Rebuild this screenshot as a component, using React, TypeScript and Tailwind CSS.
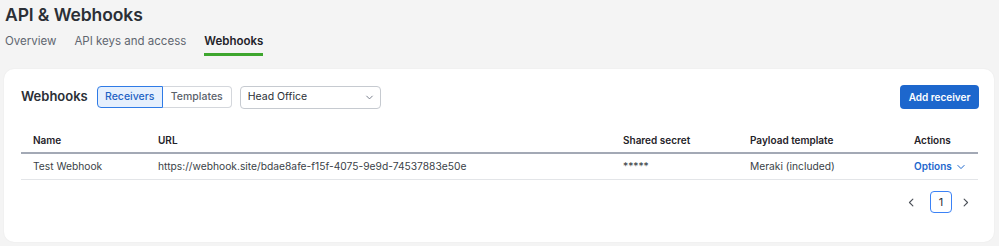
import React from 'react';

const rows = [
  {
    name: 'Test Webhook',
    url: 'https://webhook.site/bdae8afe-f15f-4075-9e9d-74537883e50e',
    secret: '*****',
    template: 'Meraki (included)',
  },
];

function Chevron({ dir = 'down', className = '' }: { dir?: 'down' | 'left' | 'right'; className?: string }) {
  const d =
    dir === 'down' ? 'M3 5.5l5 5 5-5' : dir === 'left' ? 'M10 3l-5 5 5 5' : 'M6 3l5 5-5 5';
  return (
    <svg viewBox="0 0 16 16" className={className} fill="none" stroke="currentColor" strokeWidth="1.6" strokeLinecap="round" strokeLinejoin="round">
      <path d={d} />
    </svg>
  );
}

export default function App() {
  return (
    <div className="w-[999px] h-[246px] bg-[#f4f4f4] font-['Inter',sans-serif] text-[#2a2e36] overflow-hidden">
      {/* Page header */}
      <div className="px-[5px] pt-[3px]">
        <h1 className="text-[17.5px] leading-[24px] font-semibold tracking-[-0.1px] text-[#2b2f36]">API &amp; Webhooks</h1>
        <div className="flex gap-[18px] mt-[6px] text-[11.5px] leading-[16px]">
          <div className="text-[#5f6670] pb-[6px]">Overview</div>
          <div className="text-[#5f6670] pb-[6px]">API keys and access</div>
          <div className="font-semibold text-[#1f2329] pb-[4px] border-b-[3px] border-[#3ea62e]">Webhooks</div>
        </div>
      </div>

      {/* Card */}
      <div className="mx-[4px] mt-[13px] h-[173px] w-[990px] bg-white rounded-[10px] shadow-[0_0_2px_rgba(0,0,0,0.06)] px-[17px] pt-[16px]">
        <div className="flex items-center h-[24px]">
          <div className="text-[13px] font-semibold text-[#2b2f36] mr-[9px]">Webhooks</div>
          <div className="flex h-[22px] text-[10.5px] font-medium">
            <div className="w-[66px] justify-center flex items-center rounded-l-[4px] border border-[#2f7be6] bg-[#e6f0fd] text-[#1f62c4]">Receivers</div>
            <div className="w-[69px] justify-center flex items-center rounded-r-[4px] border border-l-0 border-[#d4d7dc] text-[#5b626b]">Templates</div>
          </div>
          <div className="ml-[8px] w-[141px] h-[23px] rounded-[4px] border border-[#c6cad0] flex items-center justify-between pl-[7px] pr-[6px] text-[10.5px] text-[#2b2f36]">
            <span>Head Office</span>
            <Chevron className="w-[9px] h-[9px] text-[#6b7280]" />
          </div>
          <div className="ml-auto mr-[-2px] w-[79px] h-[24px] justify-center rounded-[4px] bg-[#1d67cd] text-white text-[10px] font-semibold flex items-center">
            Add receiver
          </div>
        </div>

        {/* Table */}
        <div className="mt-[20px] w-[957px]">
          <div className="grid grid-cols-[137px_465px_127px_164px_64px] h-[25px] items-center border-b-2 border-[#a3a9b5] text-[10px] font-semibold text-[#1f2329]">
            <div className="pl-3">Name</div>
            <div>URL</div>
            <div>Shared secret</div>
            <div>Payload template</div>
            <div>Actions</div>
          </div>
          {rows.map((r) => (
            <div key={r.name} className="grid grid-cols-[137px_465px_127px_164px_64px] h-[26px] items-center border-b border-[#e3e5e8] text-[10.25px] text-[#3a3f47]">
              <div className="pl-3">{r.name}</div>
              <div>{r.url}</div>
              <div>{r.secret}</div>
              <div>{r.template}</div>
              <div className="flex items-center gap-[4px] text-[#1d67cd] font-semibold text-[10px]">
                Options
                <Chevron className="w-[10px] h-[10px]" />
              </div>
            </div>
          ))}
        </div>

        {/* Pagination */}
        <div className="flex justify-end items-center mt-[11px] mr-[6px] text-[#4b5058]">
          <Chevron dir="left" className="w-[11px] h-[11px] mr-[13px]" />
          <div className="w-[22px] h-[22px] rounded-[4px] border-[1.5px] border-[#3b82f6] flex items-center justify-center text-[11px] text-[#2b2f36]">
            1
          </div>
          <Chevron dir="right" className="w-[11px] h-[11px] ml-[8px]" />
        </div>
      </div>
    </div>
  );
}
